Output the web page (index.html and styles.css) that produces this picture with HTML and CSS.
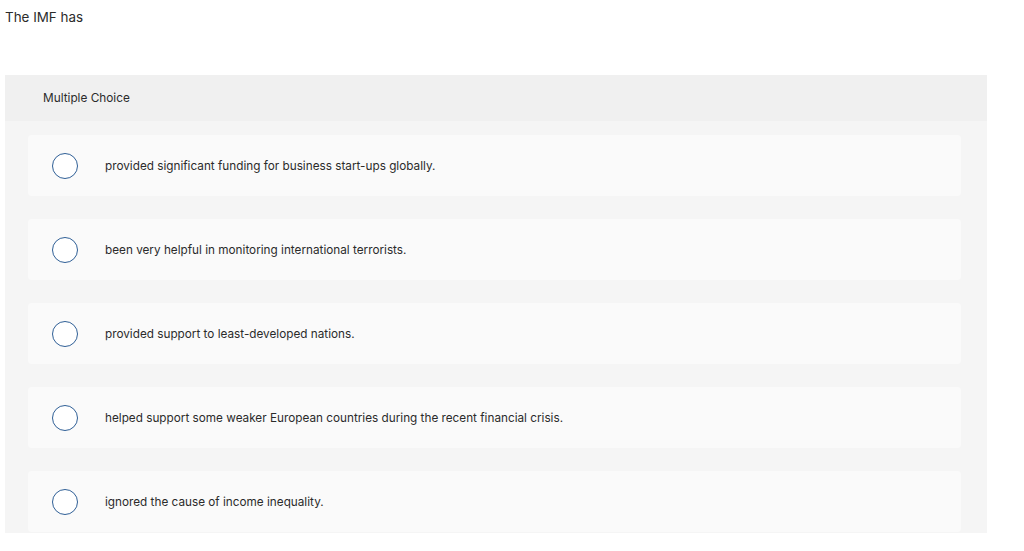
FILE: index.html
```html
<!DOCTYPE html>
<html lang="en">
<head>
<meta charset="utf-8">
<title>The IMF has</title>
<link rel="stylesheet" href="styles.css">
</head>
<body>
<div class="question">The IMF has</div>
<div class="panel">
  <div class="panel-header">Multiple Choice</div>
  <div class="panel-body">
    <label class="choice"><span class="radio"></span><span class="choice-text">provided significant funding for business start-ups globally.</span></label>
    <label class="choice"><span class="radio"></span><span class="choice-text">been very helpful in monitoring international terrorists.</span></label>
    <label class="choice"><span class="radio"></span><span class="choice-text">provided support to least-developed nations.</span></label>
    <label class="choice"><span class="radio"></span><span class="choice-text">helped support some weaker European countries during the recent financial crisis.</span></label>
    <label class="choice"><span class="radio"></span><span class="choice-text">ignored the cause of income inequality.</span></label>
  </div>
</div>
</body>
</html>
```
FILE: styles.css
```css
html, body {
  margin: 0;
  padding: 0;
  background: #ffffff;
}
body {
  font-family: "Inter", "Open Sans", "Liberation Sans", sans-serif;
  color: #2b2b2b;
}
.question {
  padding: 9px 5px 0;
  font-size: 13.4px;
  line-height: 16px;
  height: 16px;
}
.panel {
  margin: 50px 0 0 5px;
  width: 982px;
}
.panel-header {
  height: 46px;
  background: #f0f0f0;
  padding-left: 38px;
  display: flex;
  align-items: center;
  font-size: 11.8px;
}
.panel-body {
  background: #f5f5f5;
  padding: 14px 26px 1px 23px;
  display: flex;
  flex-direction: column;
  gap: 23px;
}
.choice {
  height: 61px;
  background: #fafafa;
  border-radius: 4px;
  display: flex;
  align-items: center;
  padding-left: 24px;
  font-size: 11.75px;
}
.radio {
  width: 26px;
  height: 26px;
  box-sizing: border-box;
  border: 1.5px solid #2f5f96;
  border-radius: 50%;
  background: #ffffff;
  flex: none;
}
.choice-text {
  margin-left: 27px;
}
```
